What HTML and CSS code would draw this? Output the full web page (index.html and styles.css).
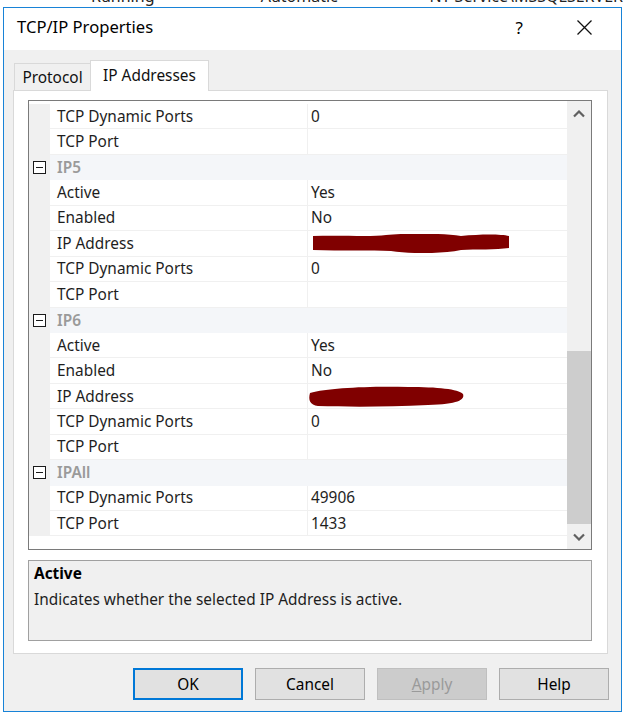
FILE: index.html
```html
<!DOCTYPE html>
<html>
<head>
<meta charset="utf-8">
<link rel="stylesheet" href="styles.css">
</head>
<body>
<div class="bg-strip">
  <div class="bg-strip-inner">
    <span class="bg-c1">Running</span>
    <span class="bg-c2">Automatic</span>
    <span class="bg-c3">NT Service\MSSQLSERVER</span>
  </div>
</div>
<div class="window">
  <div class="titlebar">
    <div class="title">TCP/IP Properties</div>
    <div class="help">?</div>
    <svg class="close" width="15" height="15" viewBox="0 0 15 15"><path d="M0.5 0.5 L14.5 14.5 M14.5 0.5 L0.5 14.5" stroke="#111" stroke-width="1.3" fill="none"/></svg>
  </div>
  <div class="body">
    <div class="tabs">
      <div class="tab">Protocol</div>
      <div class="tab tab-active">IP Addresses</div>
    </div>
    <div class="panel">
      <div class="grid">
        <div class="rows">
          <div class="row"><div class="gutter"></div><div class="name">TCP Dynamic Ports</div><div class="value">0</div></div>
          <div class="row"><div class="gutter"></div><div class="name">TCP Port</div><div class="value"></div></div>
          <div class="row"><div class="gutter"><span class="minus"></span></div><div class="cat">IP5</div></div>
          <div class="row"><div class="gutter"></div><div class="name">Active</div><div class="value">Yes</div></div>
          <div class="row"><div class="gutter"></div><div class="name">Enabled</div><div class="value">No</div></div>
          <div class="row"><div class="gutter"></div><div class="name">IP Address</div><div class="value"><svg class="redact" width="200" height="19" viewBox="0 0 200 19"><path d="M2,2 C30,1 60,3 75,1 C95,-1 130,-1 150,2 C170,0 190,0 198,2 L198,14 C185,16 165,15 150,16 C130,20 100,20 80,17 C60,16 30,17 2,16 Z" fill="#800000"/></svg></div></div>
          <div class="row"><div class="gutter"></div><div class="name">TCP Dynamic Ports</div><div class="value">0</div></div>
          <div class="row"><div class="gutter"></div><div class="name">TCP Port</div><div class="value"></div></div>
          <div class="row"><div class="gutter"><span class="minus"></span></div><div class="cat">IP6</div></div>
          <div class="row"><div class="gutter"></div><div class="name">Active</div><div class="value">Yes</div></div>
          <div class="row"><div class="gutter"></div><div class="name">Enabled</div><div class="value">No</div></div>
          <div class="row"><div class="gutter"></div><div class="name">IP Address</div><div class="value value-tight"><svg class="redact" width="157" height="21" viewBox="0 0 157 21"><path d="M2,7 C20,2 60,0 100,1 C130,1 150,3 155,8 C157,14 150,18 120,19 C80,21 40,21 10,20 C2,19 0,14 2,7 Z" fill="#800000"/></svg></div></div>
          <div class="row"><div class="gutter"></div><div class="name">TCP Dynamic Ports</div><div class="value">0</div></div>
          <div class="row"><div class="gutter"></div><div class="name">TCP Port</div><div class="value"></div></div>
          <div class="row"><div class="gutter"><span class="minus"></span></div><div class="cat">IPAll</div></div>
          <div class="row"><div class="gutter"></div><div class="name">TCP Dynamic Ports</div><div class="value">49906</div></div>
          <div class="row"><div class="gutter"></div><div class="name">TCP Port</div><div class="value">1433</div></div>
        </div>
        <div class="scrollbar">
          <div class="sb-btn"><svg width="12" height="8" viewBox="0 0 12 8"><path d="M1 6.5 L6 1.5 L11 6.5" stroke="#606060" stroke-width="2.2" fill="none"/></svg></div>
          <div class="sb-track"><div class="sb-thumb"></div></div>
          <div class="sb-btn"><svg width="12" height="8" viewBox="0 0 12 8"><path d="M1 1.5 L6 6.5 L11 1.5" stroke="#606060" stroke-width="2.2" fill="none"/></svg></div>
        </div>
      </div>
      <div class="desc">
        <div class="desc-title">Active</div>
        <div class="desc-text">Indicates whether the selected IP Address is active.</div>
      </div>
    </div>
    <div class="buttons">
      <div class="btn btn-default">OK</div>
      <div class="btn">Cancel</div>
      <div class="btn btn-disabled"><u>A</u>pply</div>
      <div class="btn">Help</div>
    </div>
  </div>
</div>
</body>
</html>
```

FILE: styles.css
```css
* { box-sizing: border-box; }

body {
  margin: 0;
  width: 623px;
  height: 715px;
  overflow: hidden;
  background: #ffffff;
  font-family: "Noto Sans", "Open Sans", sans-serif;
  font-size: 15.4px;
  color: #1e1e1e;
}

.bg-strip {
  height: 7px;
  overflow: hidden;
}

.bg-strip-inner {
  display: flex;
  margin-top: -14px;
  line-height: 20px;
  font-size: 16px;
  color: #222;
  white-space: nowrap;
  padding-left: 91px;
}

.bg-c1 { width: 189px; }
.bg-c2 { width: 188px; }

.window {
  margin-left: 3px;
  width: 619px;
  border: 1px solid #1883d7;
  background: #f0f0f0;
}

.titlebar {
  height: 42px;
  background: #ffffff;
  display: flex;
  align-items: center;
  padding-bottom: 5px;
}

.title {
  flex: 1;
  margin-left: 13px;
  font-size: 16.6px;
  color: #000;
}

.help {
  font-size: 17px;
  color: #000;
  margin-right: 54px;
  padding-top: 2px;
}

.close {
  margin-right: 29px;
  margin-top: 2px;
}

.body {
  padding: 10px 12px 11px 9px;
  display: flex;
  flex-direction: column;
}

.tabs {
  display: flex;
  align-items: flex-end;
  height: 30px;
  margin-left: 1px;
}

.tab {
  height: 27px;
  width: 76px;
  border-top: 1px solid #d9d9d9;
  border-left: 1px solid #d9d9d9;
  background: #f0f0f0;
  display: flex;
  align-items: center;
  justify-content: center;
  padding-top: 1px;
  color: #111;
}

.tab-active {
  height: 31px;
  width: 119px;
  border-right: 1px solid #d9d9d9;
  background: #ffffff;
  margin-bottom: -1px;
  position: relative;
  z-index: 1;
  padding-top: 0;
  padding-bottom: 2px;
}

.panel {
  width: 595px;
  height: 564px;
  border: 1px solid #d9d9d9;
  background: #ffffff;
  padding: 9px 15px 12px 14px;
  display: flex;
  flex-direction: column;
}

.grid {
  height: 450px;
  border: 1px solid #7a7a7a;
  display: flex;
}

.rows {
  flex: 1;
  padding-top: 3px;
  background: #ffffff;
}

.row {
  display: grid;
  grid-template-columns: 21px 258px 1fr;
  height: 25.44px;
}

.gutter {
  background: #f0f0f0;
  display: flex;
  align-items: center;
  padding-left: 4px;
}

.name {
  border-right: 1px solid #f0f0f0;
  border-bottom: 1px solid #f0f0f0;
  padding-left: 7px;
  display: flex;
  align-items: center;
  white-space: nowrap;
}

.value {
  border-bottom: 1px solid #f0f0f0;
  padding-left: 3px;
  display: flex;
  align-items: center;
  white-space: nowrap;
}

.value-tight { padding-left: 0; }

.cat {
  grid-column: 2 / 4;
  background: #f4f6f9;
  color: #9a9a9a;
  font-weight: 600;
  padding-left: 7px;
  display: flex;
  align-items: center;
}

.minus {
  width: 13px;
  height: 13px;
  border: 1.3px solid #1a1a1a;
  display: flex;
  align-items: center;
  justify-content: center;
  background: #fff;
}

.minus::after {
  content: "";
  width: 7px;
  height: 1.3px;
  background: #1a1a1a;
}

.redact { display: block; }

.scrollbar {
  width: 24px;
  background: #f0f0f0;
  display: flex;
  flex-direction: column;
}

.sb-btn {
  height: 25px;
  display: flex;
  align-items: center;
  justify-content: center;
}

.sb-track {
  flex: 1;
  display: flex;
  flex-direction: column;
  justify-content: flex-end;
}

.sb-thumb {
  height: 173px;
  background: #cdcdcd;
}

.desc {
  margin-top: 10px;
  height: 81px;
  border: 1px solid #a0a0a0;
  background: #f0f0f0;
  padding: 2px 5px;
}

.desc-title {
  font-weight: 700;
  line-height: 22px;
  color: #000;
}

.desc-text {
  margin-top: 4px;
  line-height: 22px;
  color: #1e1e1e;
}

.buttons {
  margin-top: 14px;
  display: flex;
  justify-content: flex-end;
  gap: 12px;
}

.btn {
  width: 110px;
  height: 32px;
  background: #e1e1e1;
  border: 1px solid #adadad;
  display: flex;
  align-items: center;
  justify-content: center;
  color: #000;
}

.btn-default {
  border: 2px solid #0078d7;
}

.btn-disabled {
  background: #cccccc;
  border-color: #bfbfbf;
  color: #9a9a9a;
}
```
